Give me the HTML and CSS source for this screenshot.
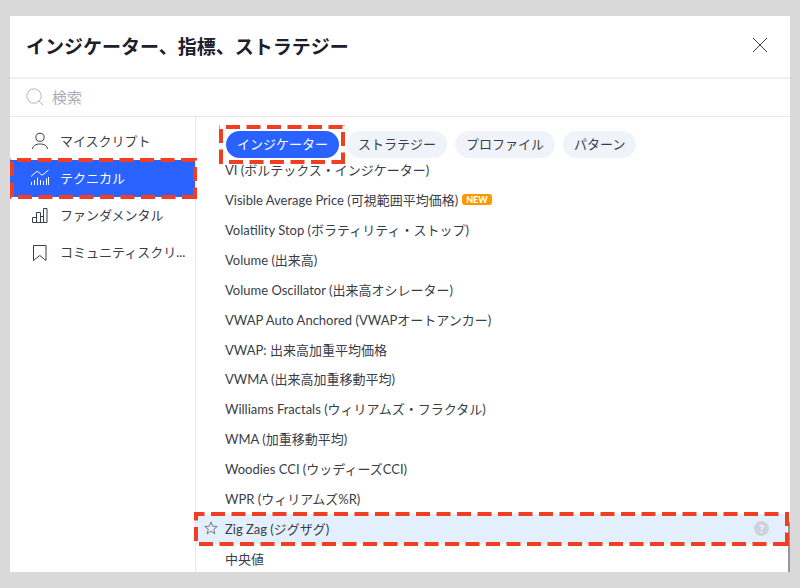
FILE: index.html
```
<!DOCTYPE html>
<html lang="ja">
<head>
  <meta charset="UTF-8" />
  <meta name="viewport" content="width=device-width, initial-scale=1" />
  <title>インジケーター、指標、ストラテジー</title>
  <link rel="stylesheet" href="styles.css">
</head>
<body>
  <div class="dialog" role="dialog" aria-labelledby="dialogTitle">
    <header class="dialog-header">
      <h1 id="dialogTitle">インジケーター、指標、ストラテジー</h1>
      <button class="close-btn" aria-label="閉じる">
        <svg width="16" height="16" viewBox="0 0 16 16"><path d="M1 1l14 14M15 1L1 15" /></svg>
      </button>
    </header>

    <div class="search">
      <label for="searchInput" aria-label="検索">
        <svg width="18" height="18" viewBox="0 0 18 18"><circle cx="8" cy="8" r="7.2" /><path d="M13 13l4 4" /></svg>
      </label>
      <input type="text" id="searchInput" placeholder="検索">
    </div>

    <div class="dialog-body">
      <nav class="sidebar">
        <button class="menu-item">
          <svg width="20" height="20" viewBox="0 0 20 20"><circle cx="10" cy="6.3" r="4.1" /><path d="M2.5 18c.4-3.400 3.200-5 7.500-5s7.100 1.600 7.500 5" /></svg>
          <span>マイスクリプト</span>
        </button>
        <button class="menu-item active">
          <svg width="20" height="20" viewBox="0 0 20 20"><path d="M1 8.500l5-4.500q1.200-1 2.400 0l2.400 2.400q1.200 1.200 2.500 0L18.500 2M1.500 17v-3M4.500 17v-5M7.500 17V9.500M10.500 17v-5M13.500 17v-4M16.500 17v-6.500M18.500 17V9" /></svg>
          <span>テクニカル</span>
          <svg class="callout" aria-hidden="true">
            <line x1="0" y1="2" x2="100%" y2="2" stroke-dashoffset="-7" />
            <line x1="0" y1="39" x2="100%" y2="39" stroke-dashoffset="-8" />
            <line x1="2" y1="0" x2="2" y2="100%" stroke-dashoffset="-4" />
            <line x1="185" y1="0" x2="185" y2="100%" stroke-dashoffset="-9" />
          </svg>
        </button>
        <button class="menu-item">
          <svg width="20" height="20" viewBox="0 0 20 20"><path d="M2.500 17.500v-5h4v5zM6.500 17.500v-10h4v10M10.500 13.500v-2h3M13.500 17.500v-14h3.500v14zM6.500 17.500h7" /></svg>
          <span>ファンダメンタル</span>
        </button>
        <button class="menu-item">
          <svg width="20" height="20" viewBox="0 0 20 20"><path d="M3.500 3.500h12.500v15l-6.200-5-6.300 5z" /></svg>
          <span>コミュニティスクリ...</span>
        </button>
      </nav>

      <main class="content">
        <div class="tabs">
          <button class="tab active">
            インジケーター
            <svg class="callout" aria-hidden="true">
              <line x1="0" y1="2" x2="100%" y2="2" stroke-dashoffset="-7" />
              <line x1="0" y1="37" x2="100%" y2="37" stroke-dashoffset="-10" />
              <line x1="2" y1="0" x2="2" y2="100%" stroke-dashoffset="-4" />
              <line x1="124" y1="0" x2="124" y2="100%" stroke-dashoffset="-7" />
            </svg>
          </button>
          <button class="tab">ストラテジー</button>
          <button class="tab">プロファイル</button>
          <button class="tab">パターン</button>
        </div>

        <div class="list-wrap">
          <ul class="list">
            <li>VI (ボルテックス・インジケーター)</li>
            <li>Visible Average Price (可視範囲平均価格)<span class="badge">NEW</span></li>
            <li>Volatility Stop (ボラティリティ・ストップ)</li>
            <li>Volume (出来高)</li>
            <li>Volume Oscillator (出来高オシレーター)</li>
            <li>VWAP Auto Anchored (VWAPオートアンカー)</li>
            <li>VWAP: 出来高加重平均価格</li>
            <li>VWMA (出来高加重移動平均)</li>
            <li>Williams Fractals (ウィリアムズ・フラクタル)</li>
            <li>WMA (加重移動平均)</li>
            <li>Woodies CCI (ウッディーズCCI)</li>
            <li>WPR (ウィリアムズ%R)</li>
            <li class="selected">
              <button class="star" aria-label="お気に入りに追加">
                <svg width="14" height="14" viewBox="0 0 14 14"><path d="M7 1l1.700 4.200 4.500.3-3.500 2.800 1.200 4.500L7 10.300l-3.900 2.500 1.200-4.500L.8 5.500l4.500-.3z" /></svg>
              </button>
              Zig Zag (ジグザグ)
              <button class="help" aria-label="ヘルプ">?</button>
              <svg class="callout" aria-hidden="true">
                <line x1="0" y1="2" x2="100%" y2="2" stroke-dashoffset="-17" />
                <line x1="0" y1="32" x2="100%" y2="32" stroke-dashoffset="-5" />
                <line x1="2" y1="0" x2="2" y2="100%" stroke-dashoffset="-15" />
                <line class="right" x1="100%" y1="0" x2="100%" y2="100%" />
              </svg>
            </li>
            <li>中央値</li>
          </ul>
        </div>
      </main>
    </div>
  </div>
</body>
</html>
```
FILE: styles.css
```
/* Reset and base */
* {
  box-sizing: border-box;
  margin: 0;
  padding: 0;
}
body {
  height: 100vh;
  padding: 16px 10px;
  background: #d9d9d9;
  color: #3a3d49;
  font-family: Lato, "Noto Sans CJK JP", sans-serif;
  font-size: 13px;
  overflow: hidden;
}
button,
input {
  font: inherit;
  color: inherit;
  background: none;
  border: none;
}
button {
  cursor: pointer;
}
svg {
  display: block;
  flex: none;
  fill: none;
  stroke: currentColor;
}

/* Dialog */
.dialog {
  display: flex;
  flex-direction: column;
  height: 100%;
  background: #fff;
}
.dialog-header {
  display: flex;
  align-items: center;
  justify-content: space-between;
  height: 63px;
  padding: 0 22px 3px 16px;
  border-bottom: 2px solid #eff0f6;
}
h1 {
  color: #1c202b;
  font-size: 19px;
  font-weight: 700;
}

/* Search */
.search {
  display: flex;
  align-items: center;
  gap: 8px;
  height: 38px;
  padding: 0 16px 2px;
  border-bottom: 1px solid #e3e5ef;
  color: #b2b5be;
}
.search input {
  flex: 1;
  min-width: 0;
  font-size: 15px;
  outline: none;
}
.search input::placeholder {
  color: #a9acb6;
}

.dialog-body {
  display: flex;
  flex: 1;
  min-height: 0;
}

/* Sidebar */
.sidebar {
  width: 186px;
  padding-top: 6px;
  border-right: 1px solid #e6e8f1;
}
.menu-item {
  position: relative;
  display: flex;
  align-items: center;
  gap: 10px;
  width: 100%;
  height: 37px;
  padding: 0 0 2px 20px;
  white-space: nowrap;
}
.menu-item.active {
  background: #2962ff;
  color: #fff;
}

/* Content */
.content {
  display: flex;
  flex-direction: column;
  flex: 1;
  min-width: 0;
}
.tabs {
  display: flex;
  gap: 8px;
  padding: 14px 30px 0;
}
.tab {
  position: relative;
  height: 27px;
  padding: 0 11px 2px;
  border-radius: 14px;
  background: #f0f3fa;
  white-space: nowrap;
}
.tab.active {
  background: #2962ff;
  color: #fff;
}
.list-wrap {
  position: relative;
  flex: 1;
  min-height: 0;
}
.list-wrap::after {
  content: "";
  position: absolute;
  right: 0;
  bottom: 0;
  width: 2px;
  height: 50px;
  background: #9598a1;
}
.list {
  display: grid;
  grid-auto-rows: 1fr;
  height: calc(100% + 4px);
  margin-top: -2px;
  list-style: none;
}
.list li {
  position: relative;
  display: flex;
  align-items: center;
  padding: 0 0 2px 29px;
  white-space: nowrap;
}
.list li.selected {
  gap: 7px;
  margin-right: 3px;
  padding: 0 18px 2px 8px;
  background: #e3effd;
}
.badge {
  margin-left: 4px;
  padding: 0 4px;
  border-radius: 3px;
  background: #ff9800;
  color: #fff;
  font-size: 9px;
  font-weight: 900;
  line-height: 11px;
}
.star {
  color: #787b86;
}
.help {
  width: 15px;
  height: 15px;
  margin-left: auto;
  border-radius: 50%;
  background: #cdd2dc;
  color: #f3f7fd;
  font-size: 12px;
  font-weight: 700;
  line-height: 15px;
}

/* Dashed callouts */
.callout {
  position: absolute;
  z-index: 1;
  overflow: visible;
  stroke: #f03e23;
  stroke-width: 4;
  stroke-dasharray: 14 6.5;
  pointer-events: none;
}
.menu-item .callout {
  top: -2px;
  left: 0;
  width: 187px;
  height: 41px;
}
.tab .callout {
  top: -6px;
  left: -7px;
  width: 126px;
  height: 39px;
}
.selected .callout {
  top: -2px;
  left: -2px;
  width: calc(100% + 4px);
  height: 34px;
}
.selected .callout .right {
  transform: translateX(-2px);
}
```
